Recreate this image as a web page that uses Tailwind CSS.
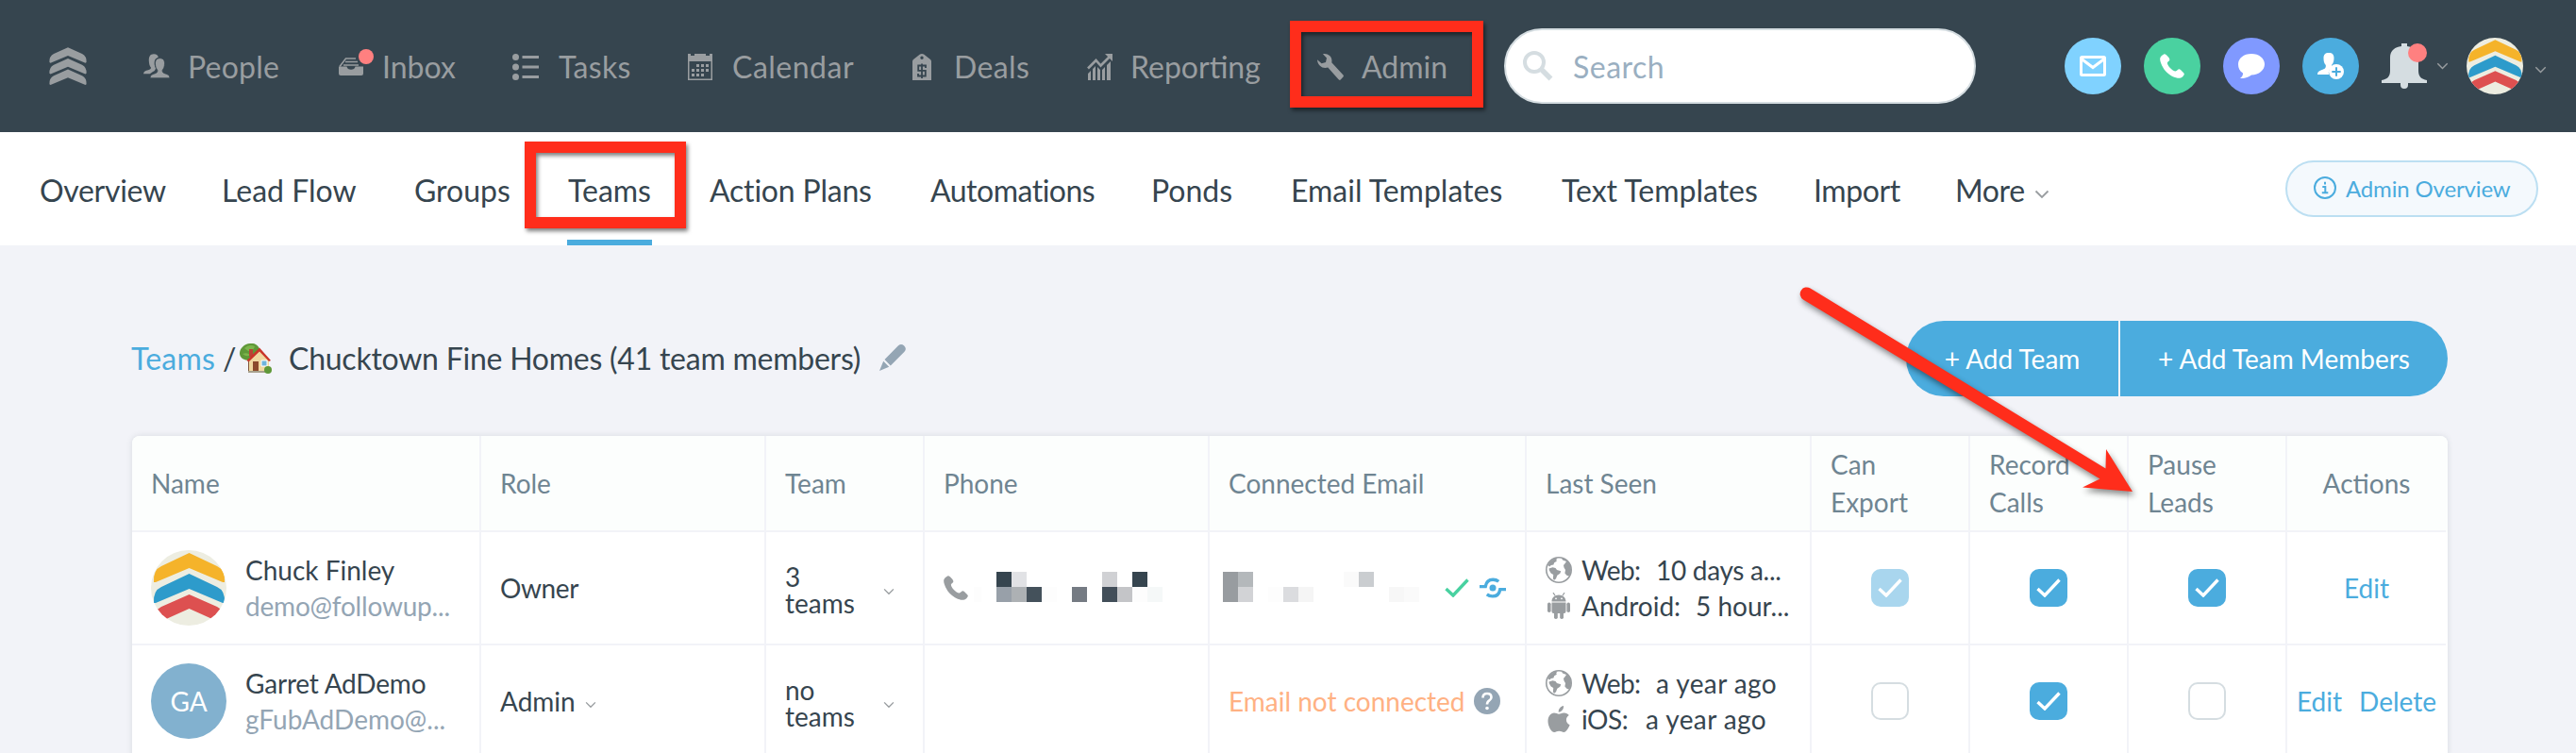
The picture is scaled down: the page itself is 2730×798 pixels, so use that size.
<!DOCTYPE html>
<html lang="en">
<head>
    <meta charset="UTF-8">
    <meta name="viewport" content="width=device-width, initial-scale=1.0">
    <title>Teams - Admin</title>
    <script src="https://cdn.jsdelivr.net/npm/@tailwindcss/browser@4"></script>
</head>
<body class="relative w-[2730px] h-[798px] overflow-hidden bg-[#f2f3f8] text-[#36454f] font-[Lato,sans-serif] text-[28px] leading-[38px]">

    <!-- Shared icons -->
    <svg class="hidden">
        <symbol id="chevron" viewBox="0 0 16 10"><path d="M1.5 1.5 8 8l6.5-6.5" fill="none" stroke="currentColor" stroke-width="1.8"/></symbol>
        <symbol id="check" viewBox="0 0 26 20"><path d="M1.5 11 9 18 24.5 1.5" fill="none" stroke="currentColor" stroke-width="3.4"/></symbol>
        <symbol id="phone" viewBox="0 0 26 26"><path d="M4.8.3C3.2.8.4 3 .2 5.2c-.3 3.300 3 10.300 6.700 14 3.600 3.800 10 7 14.300 6.600 2.200-.2 4.300-2.600 4.700-4.300.1-.8-4.100-5-5.300-5.300-1.200-.2-2.600 2.200-3.900 2.200-1.700 0-4.200-1.700-5.800-3.500C9.200 13.200 7.800 11 7.900 9.500c.1-1.300 2.400-2 2.500-3.300C10.500 4.700 6.300-.2 4.800.3Z" fill="currentColor"/></symbol>
        <symbol id="globe" viewBox="0 0 28 28">
            <circle cx="14" cy="14" r="13.2" fill="#fff" stroke="#999da0" stroke-width="1.600"/>
            <path d="M2.500 9C4.500 4.500 8 1.700 12.500 1.200l-1.200 2 .5 1.600-2.600 1.400-.8 2.300-2.600.5-1.600 1.500ZM3.500 12.500l4-1.300 3 .8 1.500 2 4.300 1.200-1 2.600-3 2-1.300 3.500-1.800 1.500-1.300-1.300.3-4.500-2.500-1.500-1.800-3ZM17 1.500C22.500 2.500 27 7.500 27 13.500q0 4-1.800 7l-2.500-.5-2.300-2.500.6-3.500-1.500-2.500-.5-2.500 1.500-1.700 1.500-2.300-4-1.500Z" fill="#999da0"/>
        </symbol>
        <symbol id="badge" viewBox="0 0 80 80">
            <path d="M0 0h80v80H0z" fill="#ededE1"/>
            <path d="M40.500 3 70 17Q79 21 78 34h-2L40.500 19 5 34H3Q2 21 11 17Z" fill="#f5b32a"/>
            <path d="M40.500 25 70 39Q79 43 78 56h-2L40.500 41 5 56H3Q2 43 11 39Z" fill="#2d9bcb"/>
            <path d="M40.500 47 70 60Q79 64 78 78h-2L40.500 62 5 78H3Q2 64 11 60Z" fill="#dd5050"/>
        </symbol>
    </svg>

    <!-- Main navigation -->
    <header class="flex items-center h-[140px] bg-[#36454f] text-[#999da0] text-[32px]">
        <svg class="w-10 h-10 ml-[52px] mr-[60px]" viewBox="0 0 40 40" fill="currentColor">
            <path d="M20 .3 35 7q5 2.600 4.600 9l-1.100.7L20 9 1.500 16.700.4 16Q0 9.600 5 7Z"/>
            <path d="M20 12 35 18.700q5 2.600 4.600 9l-1.100.7L20 20.700 1.500 28.400l-1.100-.7Q0 21.300 5 18.700Z"/>
            <path d="M20 23.500 35 30.200q5 2.600 4.600 9l-1.100.7L20 32.200 1.500 39.900l-1.100-.7Q0 32.800 5 30.200Z"/>
        </svg>
        <nav class="flex items-center">
            <a class="flex items-center w-[207px]">
                <svg class="w-7 h-[26px] mr-[19px]" viewBox="0 0 28 26" fill="currentColor">
                    <path d="M11 .2c3 0 4.500 1.500 4.700 3.500-3 1-4.300 3-4.100 6.500.1 2 .6 3.500 1.400 4.800-.2 2-1 3-2.500 3.800-1.800 1-3 2-3.500 2.400H0c.5-2.700 2-3.200 5-4 2-.6 3-1.200 3-2.500C6.500 13 6 11 5.800 7.500 5.700 3 7 .2 11 .2Z"/>
                    <path d="M17.500 4.700c3.500 0 5.200 2.200 5 6-.1 3-.9 5-2.300 6.600-.3 2 .3 2.800 2.800 3.600 3.300 1 4.700 1.700 5 4.900H7c.3-3.200 1.700-3.900 5-4.900 2.500-.8 3-1.600 2.800-3.600-1.400-1.600-2.200-3.600-2.300-6.600-.2-3.800 1.500-6 5-6Z" stroke="#36454f" stroke-width=".8"/>
                </svg><span class="pt-[2px] tracking-[0.2px]">People</span>
            </a>
            <a class="relative flex items-center w-[184px]">
                <svg class="w-[26px] h-5 mr-5 mt-[2px]" viewBox="0 0 26 20">
                    <path d="M1 9.500 7.500 1H18M7 4.500h13M5 8h16" fill="none" stroke="currentColor" stroke-width="1.6"/>
                    <path d="M0 9.500h8.500c.5 2.300 2 3.300 4.500 3.300s4-1 4.500-3.300H26V17q0 2-2 2H2q-2 0-2-2Z" fill="currentColor"/>
                </svg><span class="pt-[2px]">Inbox</span>
                <span class="absolute left-[21px] top-[2px] size-4 rounded-full bg-[#ff8080]"></span>
            </a>
            <a class="flex items-center w-[186px]">
                <svg class="w-7 h-7 mr-[21px] mt-[2px]" viewBox="0 0 28 28" fill="currentColor">
                    <circle cx="3.500" cy="3.500" r="3.500"/><circle cx="3.500" cy="14" r="3.500"/><circle cx="3.500" cy="24.500" r="3.500"/>
                    <path d="M10.500 2H28v3H10.500zM10.500 12.500H28v3H10.500zM10.500 23H28v3H10.500z"/>
                </svg><span class="pt-[2px] tracking-[0.3px]">Tasks</span>
            </a>
            <a class="flex items-center w-[238px]">
                <svg class="w-[26px] h-7 mr-[21px] mt-[2px]" viewBox="0 0 26 28" fill="currentColor">
                    <path d="M0 0h3v2h4V0h12v2h4V0h3v28H0ZM1.500 8v18.500h23V8Z" fill-rule="evenodd"/>
                    <path d="M9 11h3v3H9zM14 11h3v3h-3zM19 11h3v3h-3zM4 16h3v3H4zM9 16h3v3H9zM14 16h3v3h-3zM19 16h3v3h-3zM4 21h3v3H4zM9 21h3v3H9zM14 21h3v3h-3z"/>
                </svg><span class="pt-[2px] tracking-[0.5px]">Calendar</span>
            </a>
            <a class="flex items-center w-[185px]">
                <svg class="w-5 h-7 mr-6 mt-[2px]" viewBox="0 0 20 28">
                    <path d="M8 .6Q10-.6 12 .6L19 6q1 1 1 2v20H0V8q0-1 1-2ZM10 2.500a1.700 1.700 0 1 0 0 3.400 1.700 1.700 0 0 0 0-3.400Z" fill="currentColor" fill-rule="evenodd"/>
                    <path d="M10 10.500v15.500M14 15v-2.500H6.200v5.300h7.600v5.700H6V21" fill="none" stroke="#36454f" stroke-width="1.800"/>
                </svg><span class="pt-[2px] tracking-[0.4px]">Deals</span>
            </a>
            <a class="flex items-center w-[244px]">
                <svg class="w-7 h-7 mr-[18px] mt-[2px]" viewBox="0 0 28 28" fill="currentColor">
                    <path d="M1 15.500 9.500 7l5 5.500L24 3" fill="none" stroke="currentColor" stroke-width="2.600"/>
                    <path d="M19 0h8v8ZM1 21l3-3v10H1zM6 16l3-3v15H6zM11 14l3 3v11h-3zM16 17l3-3v14h-3zM21 12l4-4v20h-4z"/>
                </svg><span class="pt-[2px]">Reporting</span>
            </a>
            <a class="flex items-center w-[198px]">
                <svg class="w-7 h-7 mr-[19px] mt-[2px]" viewBox="0 0 28 28" fill="currentColor">
                    <path d="M6 .3C11-.8 16.500 3 15.300 9.300L27.500 22.500q1 1.200-.5 2.500l-2.300 2.500q-1.200 1-2.300-.4L11.300 14.600C6 16.500.2 12.500 0 6.300l4.600 4 4.400-1.300L10 4.500Z"/>
                </svg><span class="pt-[2px]">Admin</span>
            </a>
        </nav>
        <div class="flex items-center w-[500px] h-20 pl-[18px] rounded-full border-2 border-[#d5dde1] bg-white text-[#9aafc1]">
            <svg class="w-8 h-8 mr-[21px]" viewBox="0 0 32 32" fill="none" stroke="#d5dde1">
                <circle cx="12" cy="12" r="10" stroke-width="4"/><path d="m20 20 9.500 9.500" stroke-width="5.500"/>
            </svg><span class="pt-[2px] tracking-[0.5px]">Search</span>
        </div>

        <!-- Quick actions -->
        <div class="flex items-center ml-[94px] text-white">
            <span class="flex items-center justify-center size-[60px] mr-6 rounded-full bg-[#80d2ff]">
                <svg class="w-7 h-[22px]" viewBox="0 0 28 22" fill="none" stroke="currentColor" stroke-width="3"><rect x="1.500" y="1.500" width="25" height="19" rx="1"/><path d="m2 3.500 12 9 12-9"/></svg>
            </span>
            <span class="flex items-center justify-center size-[60px] mr-6 rounded-full bg-[#4ad1a0]">
                <svg class="w-[26px] h-[26px]"><use href="#phone"/></svg>
            </span>
            <span class="flex items-center justify-center size-[60px] mr-6 rounded-full bg-[#8099ff]">
                <svg class="w-7 h-[26px]" viewBox="0 0 28 26" fill="currentColor"><path d="M14 0c8 0 14 4.800 14 11s-6 11.300-14 11.500C11 25 6 26.500 2 26c2-1.500 3.200-3.500 3-5.500C1.600 18.500 0 15 0 11 0 4.800 6 0 14 0Z"/></svg>
            </span>
            <span class="flex items-center justify-center size-[60px] mr-6 rounded-full bg-[#4bacde]">
                <svg class="w-7 h-7" viewBox="0 0 28 28">
                    <path d="M12 0c4 0 5.500 2 5.500 5.500 0 3.500-.7 5.500-2.500 7.500v2.500c-3 2-3.500 4.500-3 7.500H0c.3-3.300 1.600-4 5.500-5.300C8.500 16.700 9 15.500 8.800 13 7 11 6.500 9 6.500 5.500 6.500 2 8 0 12 0Z" fill="currentColor"/>
                    <circle cx="20" cy="20" r="8" fill="currentColor"/><path d="M20 15.300v9.400M15.300 20h9.400" stroke="#4bacde" stroke-width="2"/>
                </svg>
            </span>
            <span class="relative mr-[10px]">
                <svg class="w-12 h-12" viewBox="0 0 48 48" fill="#d5dde1"><path d="M21 0h6v3c7 .7 12 5 12 12v14c0 6 3 9 9 10v3H28v2q0 4-4 4t-4-4v-2H0v-3c6-1 9-4 9-10V15C9 8 14 3.700 21 3Z"/></svg>
                <span class="absolute right-0 top-0 size-5 rounded-full bg-[#ff8080]"></span>
            </span>
            <svg class="w-[13px] h-2 mr-[19px] text-[#999da0]"><use href="#chevron"/></svg>
            <svg class="size-[60px] mr-3 rounded-full"><use href="#badge"/></svg>
            <svg class="w-[13px] h-2 mt-2 text-[#999da0]"><use href="#chevron"/></svg>
        </div>
    </header>

    <!-- Admin tabs -->
    <div class="flex items-center h-[120px] pl-[41px] bg-white text-[32px]">
        <nav class="flex items-center h-full gap-[60px] whitespace-nowrap pt-1 *:pl-px">
            <a class="w-[133px] tracking-[-0.3px]">Overview</a>
            <a class="w-[144px]">Lead Flow</a>
            <a class="w-[103px]">Groups</a>
            <a class="w-[90px] relative">Teams<span class="absolute left-0 -bottom-[39px] w-full h-[6px] bg-[#4bacde]"></span></a>
            <a class="w-[174px] tracking-[-0.2px]">Action Plans</a>
            <a class="w-[174px] tracking-[-0.5px]">Automations</a>
            <a class="w-[88px]">Ponds</a>
            <a class="w-[227px]">Email Templates</a>
            <a class="w-[207px]">Text Templates</a>
            <a class="w-[90px] tracking-[-0.4px]">Import</a>
            <a class="flex items-center gap-[10px] tracking-[-0.4px]">More<svg class="w-4 h-[10px] mt-2 text-[#999da0]"><use href="#chevron"/></svg></a>
        </nav>
        <a class="flex items-center w-[268px] h-[60px] ml-auto mr-10 pl-[28px] rounded-full border-2 border-[#bcdff2] bg-[#f4f9fd] text-[#4bacde] text-[24px] tracking-[-0.15px] whitespace-nowrap">
            <svg class="w-6 h-6 mr-[10px] -mt-[2px]" viewBox="0 0 24 24" fill="none" stroke="currentColor" stroke-width="2"><circle cx="12" cy="12" r="11"/><path d="M12 5.800v2.600M9.300 11h3v6.500M8.800 17.300h6.500"/></svg>Admin Overview
        </a>
    </div>

    <!-- Breadcrumb -->
    <div class="flex items-center justify-between h-20 mt-20 ml-[138px] mr-[136px]">
        <div class="flex items-center text-[32px] whitespace-nowrap">
            <a class="w-[97px] pl-px tracking-[0.2px] text-[#4bacde]">Teams</a>
            <span class="w-[19px] pl-px">/</span>
            <svg class="w-[34px] h-8 mr-[17px]" viewBox="0 0 34 32">
                <path d="M9 14h4v15H9z" fill="#80563a"/>
                <path d="M11 0c6-.8 10 3 10.500 8C22 14 18 18 11 18 4 18 0 15 0 10.500 0 5 5 .5 11 0Z" fill="#5f9838"/>
                <path d="M5 5q5-5 11-2-1 5-7 5ZM3 11q5-2 8 1-3 3-8-1Z" fill="#7db54c"/>
                <path d="M10 16 21 6l10 10v13H10Z" fill="#f0d8a0"/>
                <path d="M10 6h4v8h-4z" fill="#b84536"/>
                <path d="M7.500 18 21 4.500 33 18l-2 1-10-10.500L9.500 19.500Z" fill="#c9362b"/>
                <path d="M14 19h6v10h-6z" fill="#8c4a2c"/><path d="M23 18h6v6h-6z" fill="#6fb4dd" stroke="#fff"/>
                <path d="M9 29h22v2H9z" fill="#a7a08d"/><circle cx="30" cy="28" r="4" fill="#5f9838"/>
            </svg>
            <span class="w-[623px] pl-px tracking-[-0.24px]">Chucktown Fine Homes (41 team members)</span>
            <svg class="w-7 h-7 ml-1 -mt-[2px]" viewBox="0 0 28 28" fill="#94a5b4"><path d="M20 1.300q3-2.600 6 0 3.400 3 .5 6.500L11.800 22.500 5.500 16ZM4.200 17.800l6 6L0 28Z"/></svg>
        </div>
        <div class="flex h-20 gap-[2px] text-white whitespace-nowrap">
            <button class="w-[225px] rounded-l-full bg-[#4bacde]">+ Add Team</button>
            <button class="w-[347px] rounded-r-full bg-[#4bacde]">+ Add Team Members</button>
        </div>
    </div>

    <!-- Members table -->
    <div class="w-[2454px] mt-[42px] ml-[140px] rounded-t-lg bg-white shadow-[0_0_6px_rgba(54,69,79,0.14)] *:grid *:grid-cols-[370px_302px_168px_302px_336px_302px_168px_168px_168px_168px] *:*:flex *:*:items-center *:*:border-[#f2f3f8] *:*:border-b-2 *:*:border-r-2 *:*:last:border-r-0">
        <div class="h-[102px] rounded-t-lg bg-[#fcfefd] text-[#6f8592] leading-10 *:pl-5">
            <div>Name</div>
            <div>Role</div>
            <div>Team</div>
            <div>Phone</div>
            <div>Connected Email</div>
            <div>Last Seen</div>
            <div>Can<br>Export</div>
            <div>Record<br>Calls</div>
            <div>Pause<br>Leads</div>
            <div class="justify-center !pl-0">Actions</div>
        </div>

        <div class="h-[120px]">
            <div class="pl-5 gap-5">
                <svg class="size-20 rounded-full"><use href="#badge"/></svg>
                <div>Chuck Finley<br><span class="text-[#94a5b4] tracking-[-0.2px]">demo@followup...</span></div>
            </div>
            <div class="pl-5 tracking-[-0.4px]">Owner</div>
            <div class="pl-5 pt-1 leading-7"><span class="w-[104px]">3<br>teams</span><svg class="w-3 h-2 mt-1 text-[#999da0]"><use href="#chevron"/></svg></div>
            <div class="pl-5 text-[#999da0]">
                <svg class="w-[26px] h-[26px]"><use href="#phone"/></svg>
                <!-- redacted number -->
                <svg class="w-[208px] h-8 ml-[6px] -mt-[2px]" viewBox="0 0 208 32" shape-rendering="crispEdges">
                    <path d="M24 0h16v16H24zM168 0h16v16H168z" fill="#36454f"/><path d="M40 0h16v16H40z" fill="#e1e2e5"/><path d="M136 0h16v16H136z" fill="#d0d1d4"/>
                    <path d="M24 16h16v16H24z" fill="#98a0a9"/><path d="M40 16h16v16H40z" fill="#adb1b4"/><path d="M56 16h16v16H56z" fill="#44515b"/><path d="M72 16h16v16H72zM0 16h8v16H0zM168 16h16v16H168z" fill="#fdfdfd"/>
                    <path d="M104 16h16v16H104z" fill="#757b83"/><path d="M136 16h16v16H136z" fill="#424e59"/><path d="M152 16h16v16H152z" fill="#c4c5c8"/><path d="M184 16h16v16H184z" fill="#f5f8f8"/>
                </svg>
            </div>
            <div class="pl-[14px]">
                <!-- redacted address -->
                <svg class="w-[208px] h-8 mr-[27px] -mt-[2px]" viewBox="0 0 208 32" shape-rendering="crispEdges">
                    <path d="M0 0h16v32H0z" fill="#989ca0"/><path d="M16 0h16v16H16z" fill="#b4b8bb"/><path d="M16 16h16v16H16z" fill="#d2d3d6"/>
                    <path d="M48 16h16v16H48z" fill="#fdfdfd"/><path d="M64 16h16v16H64z" fill="#dbdcdf"/><path d="M80 16h16v16H80z" fill="#f5f5f5"/>
                    <path d="M128 0h16v16H128zM192 16h16v16H192z" fill="#fafafa"/><path d="M144 0h16v16H144z" fill="#cacdd0"/><path d="M176 16h16v16H176z" fill="#f7f7f7"/>
                </svg>
                <svg class="w-[26px] h-5 mr-[11px] text-[#48d1a0]"><use href="#check"/></svg>
                <svg class="w-7 h-[22px]" viewBox="0 0 28 22" fill="none" stroke="#4bacde" stroke-width="3.400"><path d="M0 9.600h6.200C7 5 10 2.200 14.200 2.200q3.600 0 6 2M28 12.600h-6.200C21 17.200 18 19.900 13.800 19.900q-3.600 0-6-2"/><circle cx="14" cy="11" r="3.500" fill="#4bacde" stroke="none"/></svg>
            </div>
            <div class="pl-5 flex-wrap content-center">
                <p class="flex items-center w-full"><svg class="size-7 mr-[10px]"><use href="#globe"/></svg><span class="w-[79px] tracking-[-0.6px]">Web:</span><span class="tracking-[-0.3px]">10 days a...</span></p>
                <p class="flex items-center w-full">
                    <svg class="w-6 h-7 ml-[2px] mr-3" viewBox="0 0 24 28" fill="#999da0"><path d="m6 0 2 3.300M18 0l-2 3.300" stroke="#999da0" stroke-width="1.200"/><path d="M4.500 9.500c0-4 3-7 7.500-7s7.500 3 7.500 7ZM4.500 10.500h15V20q0 2-2 2h-11q-2 0-2-2Z"/><rect y="10.500" width="3.600" height="10.500" rx="1.800"/><rect x="20.400" y="10.500" width="3.600" height="10.500" rx="1.800"/><rect x="7" y="18" width="3.800" height="10" rx="1.800"/><rect x="13.200" y="18" width="3.800" height="10" rx="1.800"/><circle cx="9" cy="6.300" r=".9" fill="#fff"/><circle cx="15" cy="6.300" r=".9" fill="#fff"/></svg>
                    <span class="w-[121px]">Android:</span><span>5 hour...</span>
                </p>
            </div>
            <div class="justify-center"><span class="flex items-center justify-center size-10 rounded-[10px] bg-[#a9d6ee] text-white"><svg class="w-[26px] h-5"><use href="#check"/></svg></span></div>
            <div class="justify-center"><span class="flex items-center justify-center size-10 rounded-[10px] bg-[#4bacde] text-white"><svg class="w-[26px] h-5"><use href="#check"/></svg></span></div>
            <div class="justify-center"><span class="flex items-center justify-center size-10 rounded-[10px] bg-[#4bacde] text-white"><svg class="w-[26px] h-5"><use href="#check"/></svg></span></div>
            <div class="justify-center text-[#4bacde]"><a>Edit</a></div>
        </div>

        <div class="h-[120px]">
            <div class="pl-5 gap-5">
                <span class="flex items-center justify-center size-20 rounded-full bg-[#82b1cf] text-white">GA</span>
                <div><span class="tracking-[-0.2px]">Garret AdDemo</span><br><span class="text-[#94a5b4]">gFubAdDemo@...</span></div>
            </div>
            <div class="pl-5 gap-[10px]">Admin<svg class="w-3 h-2 mt-2 text-[#999da0]"><use href="#chevron"/></svg></div>
            <div class="pl-5 pt-1 leading-7"><span class="w-[104px]">no<br>teams</span><svg class="w-3 h-2 mt-1 text-[#999da0]"><use href="#chevron"/></svg></div>
            <div></div>
            <div class="pl-5 text-[#ffb183]">
                <span class="w-[260px] whitespace-nowrap">Email not connected</span>
                <svg class="size-7" viewBox="0 0 28 28"><circle cx="14" cy="14" r="14" fill="#94a5b4"/><path d="M9.500 10.500q0-4.500 4.500-4.500t4.500 4q0 2-2.200 3.300-2.300 1.400-2.300 4.200" fill="none" stroke="#fff" stroke-width="2.600"/><circle cx="14" cy="21.500" r="1.800" fill="#fff"/></svg>
            </div>
            <div class="pl-5 flex-wrap content-center">
                <p class="flex items-center w-full"><svg class="size-7 mr-[10px]"><use href="#globe"/></svg><span class="w-[79px] tracking-[-0.6px]">Web:</span><span class="tracking-[0.4px]">a year ago</span></p>
                <p class="flex items-center w-full">
                    <svg class="w-6 h-7 ml-[2px] mr-3" viewBox="0 0 24 28" fill="#999da0"><path d="M17 0c.4 3.500-2 6.500-5.300 6.700C11.500 3.500 14 .4 17 0ZM12 8.800c1.300 0 3-1.500 5.800-1.300 2 .1 3.800 1 5 2.600-4.300 2.700-3.600 8.400.8 10.200-1.200 3.300-3.700 7.500-6.300 7.700-1.800 0-2.600-1.200-5-1.200s-3.200 1.200-5 1.200C4 28 .6 21.500.5 16.500.4 11.500 3.300 7.800 7 7.600c2 0 3.800 1.200 5 1.200Z"/></svg>
                    <span class="w-[68px] tracking-[-0.4px]">iOS:</span><span class="tracking-[0.4px]">a year ago</span>
                </p>
            </div>
            <div class="justify-center"><span class="size-10 rounded-[10px] border-2 border-[#d5dde1]"></span></div>
            <div class="justify-center"><span class="flex items-center justify-center size-10 rounded-[10px] bg-[#4bacde] text-white"><svg class="w-[26px] h-5"><use href="#check"/></svg></span></div>
            <div class="justify-center"><span class="size-10 rounded-[10px] border-2 border-[#d5dde1]"></span></div>
            <div class="justify-center gap-[18px] text-[#4bacde]"><a>Edit</a><a>Delete</a></div>
        </div>
    </div>

    <!-- Annotations -->
    <div class="absolute left-[1367px] top-[22px] w-[205px] h-[92px] border-[12px] border-[#ff2d1b] drop-shadow-[2px_3px_2px_rgba(0,0,0,0.5)]"></div>
    <div class="absolute left-[556px] top-[150px] w-[171px] h-[92px] border-[12px] border-[#ff2d1b] drop-shadow-[2px_3px_2px_rgba(0,0,0,0.5)]"></div>
    <svg class="absolute left-[1900px] top-[290px] w-[380px] h-[250px] drop-shadow-[2px_4px_3px_rgba(0,0,0,0.45)]" viewBox="1900 290 380 250" fill="#ff2d1b">
        <path d="M1918.500 305.500 2231.500 496.500 2232 476 2260 521 2207 516.500 2225.500 507.500 1911 317.500A7 7 0 0 1 1918.500 305.500Z"/>
    </svg>
</body>
</html>
